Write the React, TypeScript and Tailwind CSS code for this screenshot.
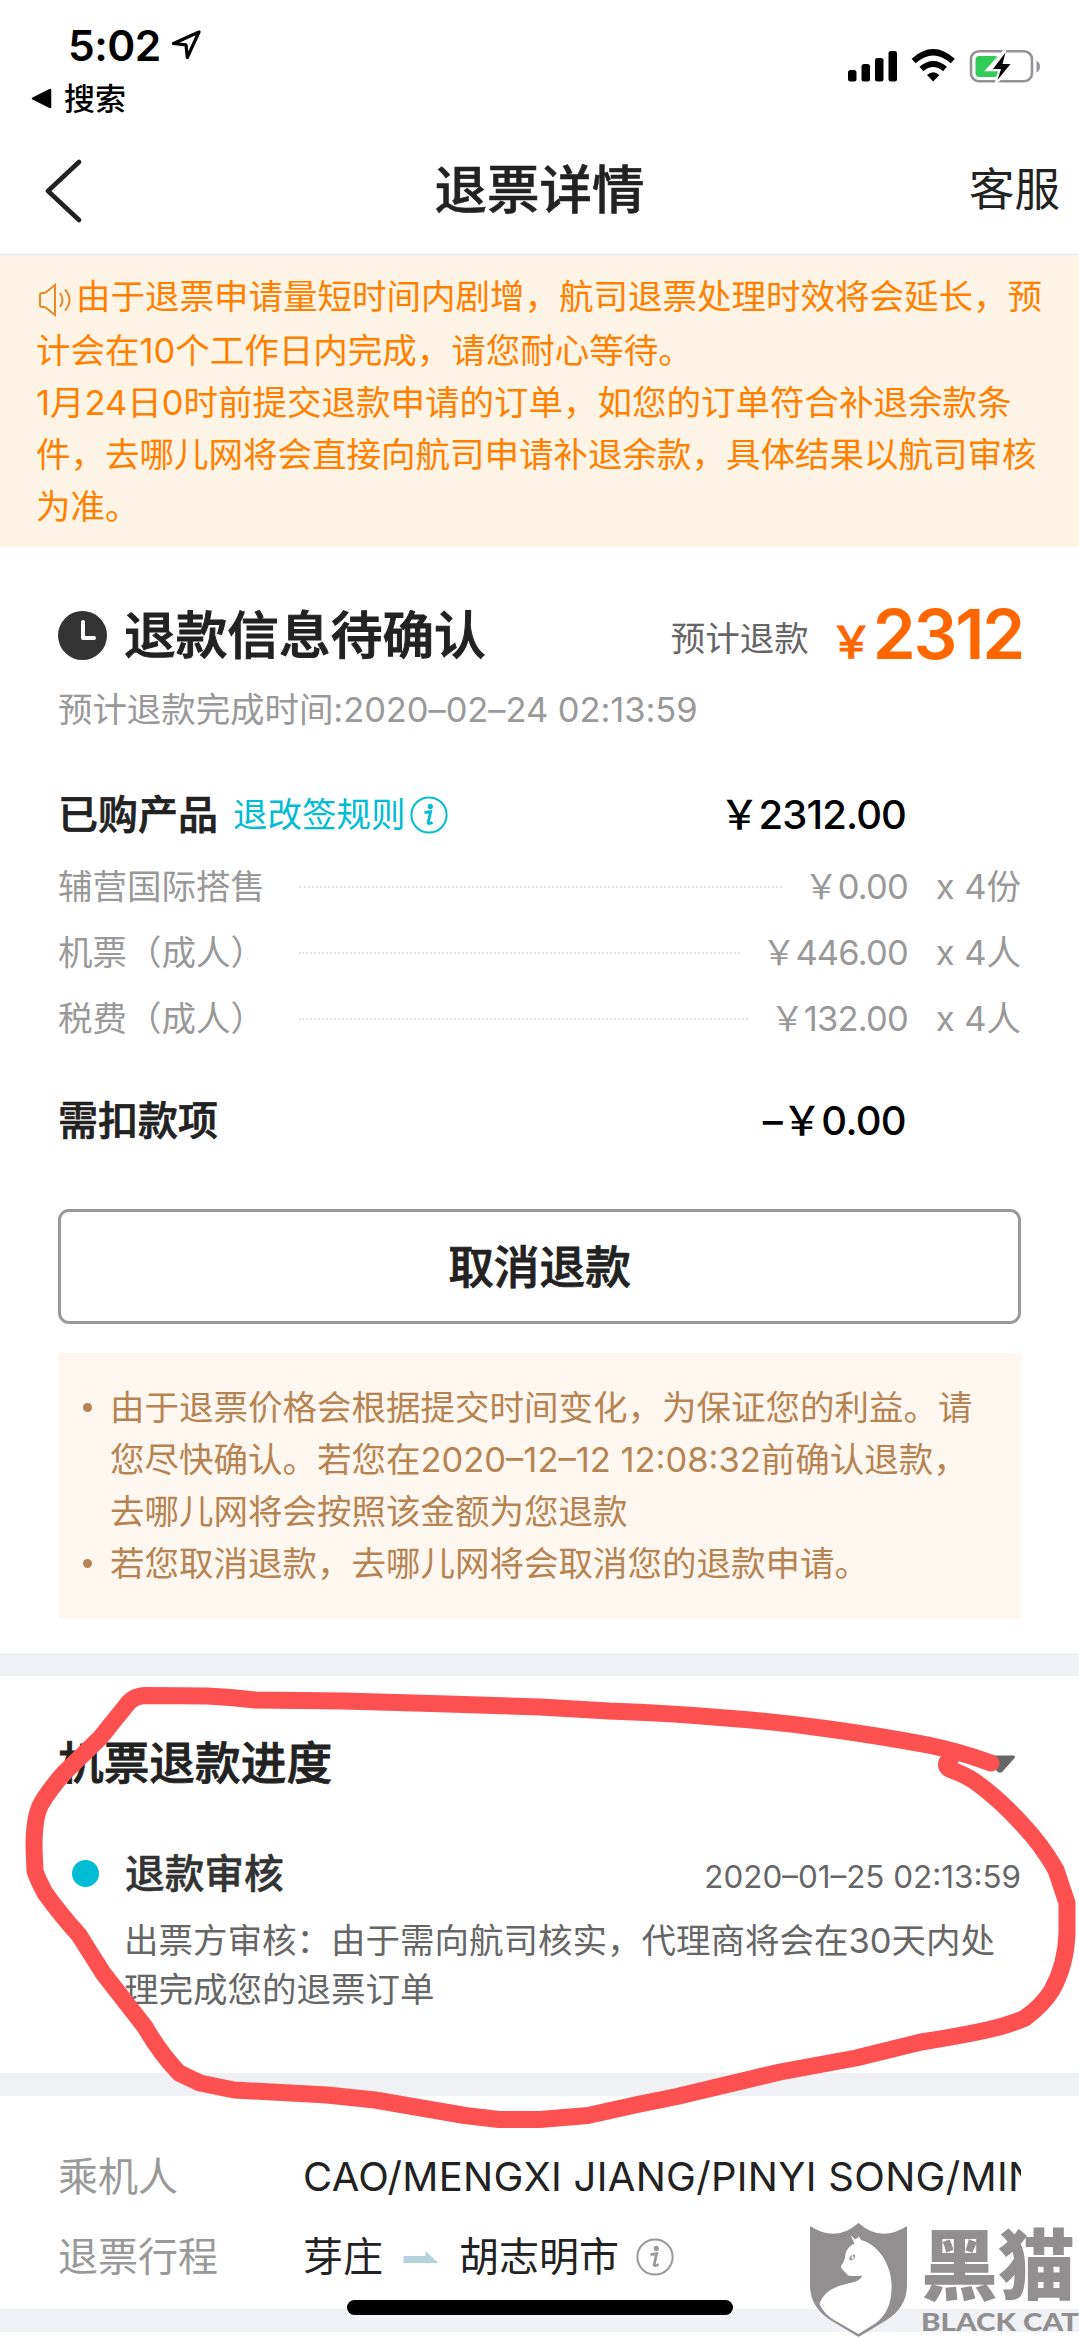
import React from "react";

interface FeeItem {
    name: string;
    price: string;
    count: string;
}

const noticeLines = [
    "计会在10个工作日内完成，请您耐心等待。",
    "1月24日0时前提交退款申请的订单，如您的订单符合补退余款条",
    "件，去哪儿网将会直接向航司申请补退余款，具体结果以航司审核",
    "为准。",
];

const feeItems: FeeItem[] = [
    { name: "辅营国际搭售", price: "￥0.00", count: "x 4份" },
    { name: "机票（成人）", price: "￥446.00", count: "x 4人" },
    { name: "税费（成人）", price: "￥132.00", count: "x 4人" },
];

const tips = [
    ["由于退票价格会根据提交时间变化，为保证您的利益。请", "您尽快确认。若您在2020–12–12 12:08:32前确认退款，", "去哪儿网将会按照该金额为您退款"],
    ["若您取消退款，去哪儿网将会取消您的退款申请。"],
];

function InfoIcon({ className }: { className: string }) {
    return (
        <svg className={className} viewBox="0 0 38 38" fill="none">
            <circle cx="19" cy="19" r="17.6" stroke="currentColor" strokeWidth="2" />
            <circle cx="20.3" cy="10.4" r="2.6" fill="currentColor" />
            <path d="M14.5 16.6 L20.6 15.6 L18.2 26.5 Q18 29 22.6 26.4" stroke="currentColor" strokeWidth="2.8" />
        </svg>
    );
}

function StatusBar() {
    return (
        <div className="flex h-[126px] justify-between">
            <div className="pl-[31px] pt-[20px]">
                <div className="flex h-[52px] items-center pl-[37px] text-[42.5px] font-semibold text-black">
                    <span className="w-[103px] tracking-[-0.5px]">5:02</span>
                    <svg className="-mt-[2px] h-[30px] w-[30px]" viewBox="0 0 30 30" fill="none">
                        <path d="M28 2 L2.5 13.5 L15 14.8 L16.3 27.5 Z" stroke="#000" strokeWidth="3.2" strokeLinejoin="round" />
                    </svg>
                </div>
                <div className="flex h-[52px] items-center text-[31px] font-medium text-black">
                    <svg className="mr-[12px] h-[21px] w-[21px]" viewBox="0 0 21 21">
                        <path d="M19 2 V19 L2 10.5 Z" fill="#000" stroke="#000" strokeWidth="2.5" strokeLinejoin="round" />
                    </svg>
                    <span className="mt-[2px]">搜索</span>
                </div>
            </div>
            <svg className="mr-[38px] mt-[46px] h-[40px] w-[196px]" viewBox="843 46 196 40" fill="none">
                <g fill="#000">
                    <rect x="846" y="70" width="8.5" height="11.5" rx="2.5" />
                    <rect x="859.5" y="64" width="8.5" height="17.5" rx="2.5" />
                    <rect x="873" y="58" width="8.5" height="23.5" rx="2.5" />
                    <rect x="886.5" y="51" width="8.5" height="30.5" rx="2.5" />
                    <path d="M931.2 81.5 L925 75 Q931.2 69.5 937.4 75 Z" />
                </g>
                <path d="M911.6 61 Q931.2 43.5 950.8 61" stroke="#000" strokeWidth="6" />
                <path d="M919.4 69 Q931.2 59 943 69" stroke="#000" strokeWidth="6" />
                <rect x="969" y="51.2" width="61" height="30" rx="8" stroke="#959297" strokeWidth="2.6" />
                <path d="M1034.5 60.5 Q1038 62.5 1038 66.5 Q1038 70.5 1034.5 72.5 Z" fill="#959297" />
                <rect x="973.5" y="56" width="23" height="21" rx="4" fill="#30cc57" />
                <path d="M1003 50 L985 70 H997.5 L994 83 L1013 63 H1000.5 Z" fill="#fff" stroke="#fff" strokeWidth="2.5" />
                <path d="M1003.5 52.5 L991 69 H999 L995.5 80 L1008.5 64 H1000.5 Z" fill="#000" />
            </svg>
        </div>
    );
}

function NavBar() {
    return (
        <div className="grid h-[130px] grid-cols-3 items-center border-b-[3px] border-[#f1f1f1] text-[#222]">
            <svg className="ml-[44px] mt-[2px] h-[64px] w-[40px]" viewBox="0 0 40 64" fill="none">
                <path d="M35 3 L4 32 L35 61" stroke="#222" strokeWidth="4.6" strokeLinecap="round" strokeLinejoin="round" />
            </svg>
            <div className="mt-[2px] text-center text-[52.5px] font-medium [-webkit-text-stroke:0.6px]">退票详情</div>
            <div className="mt-[2px] pr-[19px] text-right text-[45.5px]">客服</div>
        </div>
    );
}

function Notice() {
    return (
        <div className="h-[291px] whitespace-nowrap bg-[#fdf4e6] pl-[36px] pt-[15px] text-[34.5px] leading-[52px] text-[#ff8000]">
            <div className="mb-[2px] flex items-center">
                <svg className="mr-[2px] mt-[6px] h-[34px] w-[38px]" viewBox="0 0 38 34" fill="none" stroke="#e8892b" strokeWidth="2">
                    <path d="M9 24 H6 Q4 24 4 22 V12 Q4 10 6 10 H9 M9 10 L19 2 V32 L9 24" />
                    <path d="M24 10 Q29 17 24 24 M29 6.5 Q38 17 29 27.5" />
                </svg>
                由于退票申请量短时间内剧增，航司退票处理时效将会延长，预
            </div>
            {noticeLines.map((line) => (
                <div key={line}>{line}</div>
            ))}
        </div>
    );
}

function RefundInfo() {
    return (
        <div className="flex h-[1106px] flex-col px-[58px] pt-[54px] text-[34.5px] text-[#999]">
            <div className="flex h-[68px] items-center">
                <svg className="h-[49px] w-[49px]" viewBox="0 0 49 49" fill="none">
                    <circle cx="24.5" cy="24.5" r="24.5" fill="#333" />
                    <path d="M25 11 V27 H36" stroke="#fff" strokeWidth="4" strokeLinecap="round" strokeLinejoin="round" />
                </svg>
                <span className="ml-[17px] mt-[2px] text-[51.7px] font-medium text-[#222] [-webkit-text-stroke:1px]">退款信息待确认</span>
                <span className="ml-auto mt-[8px] text-[#666]">预计退款</span>
                <span className="ml-[21px] mt-[14px] text-[43px] font-medium text-[#ff6600] [-webkit-text-stroke:1px]">￥</span>
                <span className="-mr-[2px] text-[69px] font-semibold tracking-[-2.2px] text-[#ff6600]">2312</span>
            </div>
            <div className="mt-[15px] h-[52px] leading-[52px] tracking-[-0.08px]">预计退款完成时间:2020–02–24 02:13:59</div>
            <div className="mt-[53px] flex h-[52px] items-center text-[40px] font-medium text-black">
                <span className="text-[#222] [-webkit-text-stroke:0.7px]">已购产品</span>
                <span className="ml-[15px] text-[34.5px] font-normal text-[#00bcd4]">退改签规则</span>
                <InfoIcon className="ml-[4px] h-[38px] w-[38px] text-[#00bcd4]" />
                <span className="ml-auto mr-[115px] tracking-[-0.9px]">￥2312.00</span>
            </div>
            <div className="mt-[13px]">
                {feeItems.map((item) => (
                    <div key={item.name} className="flex h-[66px] items-center">
                        <span className="w-[241px]">{item.name}</span>
                        <span className="mr-[22px] grow border-t-2 border-dotted border-[#e2e2e2]" />
                        <span className="tracking-[-0.8px]">{item.price}</span>
                        <span className="w-[113px] text-right">{item.count}</span>
                    </div>
                ))}
            </div>
            <div className="mt-[43px] flex h-[52px] items-center justify-between text-[40px] font-medium text-black">
                <span className="text-[#222] [-webkit-text-stroke:0.7px]">需扣款项</span>
                <span className="mr-[115px] tracking-[-0.7px]">–￥0.00</span>
            </div>
            <button className="mt-[62px] h-[115px] shrink-0 rounded-[11px] border-[3px] border-[#999] pt-[3px] text-[45.7px] font-medium text-[#222] [-webkit-text-stroke:0.8px]" type="button">
                取消退款
            </button>
            <ul className="mt-[29px] h-[265px] shrink-0 whitespace-nowrap bg-[#fef7f0] pl-[25px] pt-[29px] leading-[52px] text-[#b58452]">
                {tips.map((tip) => (
                    <li key={tip[0]} className="flex">
                        <span className="mr-[18px] mt-[21px] h-[9px] w-[9px] rounded-full bg-[#b58452]" />
                        <div>
                            {tip.map((line) => (
                                <div key={line}>{line}</div>
                            ))}
                        </div>
                    </li>
                ))}
            </ul>
        </div>
    );
}

function Progress() {
    return (
        <div className="h-[397px] px-[58px] pt-[57px]">
            <div className="flex h-[62px] items-center justify-between text-[45.7px] font-medium text-[#222] [-webkit-text-stroke:0.8px]">
                机票退款进度
                <svg className="mr-[5px] h-[18px] w-[32px]" viewBox="0 0 32 18">
                    <path d="M2.5 2 H29.5 L17 16 H15 Z" fill="#666" stroke="#666" strokeWidth="3" strokeLinejoin="round" />
                </svg>
            </div>
            <div className="mt-[52px] flex h-[56px] items-center">
                <span className="-mt-[3px] ml-[14px] mr-[26px] h-[27px] w-[27px] rounded-full bg-[#00bcd4]" />
                <span className="text-[39.7px] font-medium text-[#333] [-webkit-text-stroke:0.5px]">退款审核</span>
                <span className="ml-auto mt-[6px] text-[31.4px] text-[#666]">2020–01–25 02:13:59</span>
            </div>
            <div className="ml-[66px] mt-[13px] whitespace-nowrap text-[34.5px] leading-[49px] text-[#666]">
                <div>出票方审核：由于需向航司核实，代理商将会在30天内处</div>
                <div>理完成您的退票订单</div>
            </div>
        </div>
    );
}

function Trip() {
    return (
        <div className="h-[213px] px-[58px] pt-[41px] text-[40px] text-[#222]">
            <div className="flex h-[80px] items-center">
                <span className="w-[245px] shrink-0 text-[#999]">乘机人</span>
                <span className="grow overflow-hidden whitespace-nowrap tracking-[0.3px]">CAO/MENGXI JIANG/PINYI SONG/MIN</span>
            </div>
            <div className="flex h-[80px] items-center">
                <span className="w-[245px] text-[#999]">退票行程</span>
                <span>芽庄</span>
                <svg className="mx-[20px] h-[14px] w-[36px]" viewBox="0 0 35 14">
                    <path d="M0 6 H22 V1 L35 13 H0 Z" fill="#b5d3de" />
                </svg>
                <span>胡志明市</span>
                <InfoIcon className="ml-[17px] h-[38px] w-[38px] text-[#999]" />
            </div>
        </div>
    );
}

function Watermark() {
    return (
        <div className="absolute left-[810px] top-[2223px] flex w-[269px] text-[#918f8f]">
            <svg className="h-[115px] w-[97px] shrink-0" viewBox="0 0 97 115">
                <path d="M0 3 Q26 20 48.5 0 Q71 20 97 3 V62 Q97 85 75 98 L48.5 114 L22 98 Q0 85 0 62 Z" fill="#918f8f" />
                <path
                    d="M40.5 12 L45.5 16.5 L49 13.5 L51 17 C70 22 83 45 81.5 66 C81 82 76 92 66 100 L48.5 111 L24 97 Q14 91 9.5 81 C14 68 25 63 42 59.5 Q50 58 52.5 52.5 Q45 53.5 38 52.5 C35 48 31 47 31 43 Q35 38 35.5 31 Q37 24 44.5 20.5 Z"
                    fill="#fff"
                />
                <path d="M39 36.5 Q40 31 45 31.5 Q46 35 42 37.5 Z" fill="#918f8f" />
                <ellipse cx="42.5" cy="34.3" rx="1" ry="2.4" fill="#fff" />
            </svg>
            <div className="ml-[14px] whitespace-nowrap">
                <div className="mt-[6px] h-[80px] text-[77px] font-black leading-[74px]">黑猫</div>
                <div className="h-[22px] origin-left scale-x-[1.18] font-['Lato'] text-[25px] font-black leading-[24px]">BLACK CAT</div>
            </div>
        </div>
    );
}

export default function App() {
    return (
        <div className="relative h-[2338px] w-[1079px] overflow-hidden bg-white font-['Inter','Noto_Sans_CJK_SC',sans-serif]">
            <StatusBar />
            <NavBar />
            <Notice />
            <RefundInfo />
            <div className="h-[23px] bg-[#eff1f4]" />
            <Progress />
            <div className="h-[23px] bg-[#f0f1f4]" />
            <Trip />
            <div className="h-[23px] bg-[#f0f2f5]" />

            {/* hand-drawn marker circle */}
            <svg className="pointer-events-none absolute left-0 top-0 h-[2338px] w-[1079px]" viewBox="0 0 1079 2338" fill="none">
                <path
                    d="M991 1763 Q958 1751 928 1745 Q880 1736 829 1729 Q780 1722 732 1718.500 Q670 1713 609 1711 L540 1707 L448 1704 L344 1701 L255 1700 Q230 1697 207 1696 L145 1695.500 Q135 1696 129 1702 L100 1738 L65 1772 Q49 1790 41 1804 Q34 1817 34 1847 L35 1871 Q38 1880 45 1893 Q60 1914 79 1935 L103 1973 L145 2027 Q160 2053 179 2073 L200 2083 L234 2090 L327 2095 L375 2100 L465 2115.500 L499 2119.500 L540 2119.500 L588 2115.500 L635 2105 L677 2096.500 L780 2072 L856 2058 L921 2042 Q960 2036 987 2030 Q1010 2025 1025 2018 Q1043 2005 1052 1990 Q1066 1965 1067 1933 V1903 L1056 1870 Q1042 1845 1021 1823 Q1000 1800 977 1783 Q966 1775 949 1769 Q943 1764 951 1758"
                    stroke="#fc5150"
                    strokeWidth="17"
                    strokeLinecap="round"
                    strokeLinejoin="round"
                />
            </svg>
            <Watermark />
            <div className="absolute left-[347px] top-[2300px] h-[15px] w-[386px] rounded-full bg-black" />
        </div>
    );
}
